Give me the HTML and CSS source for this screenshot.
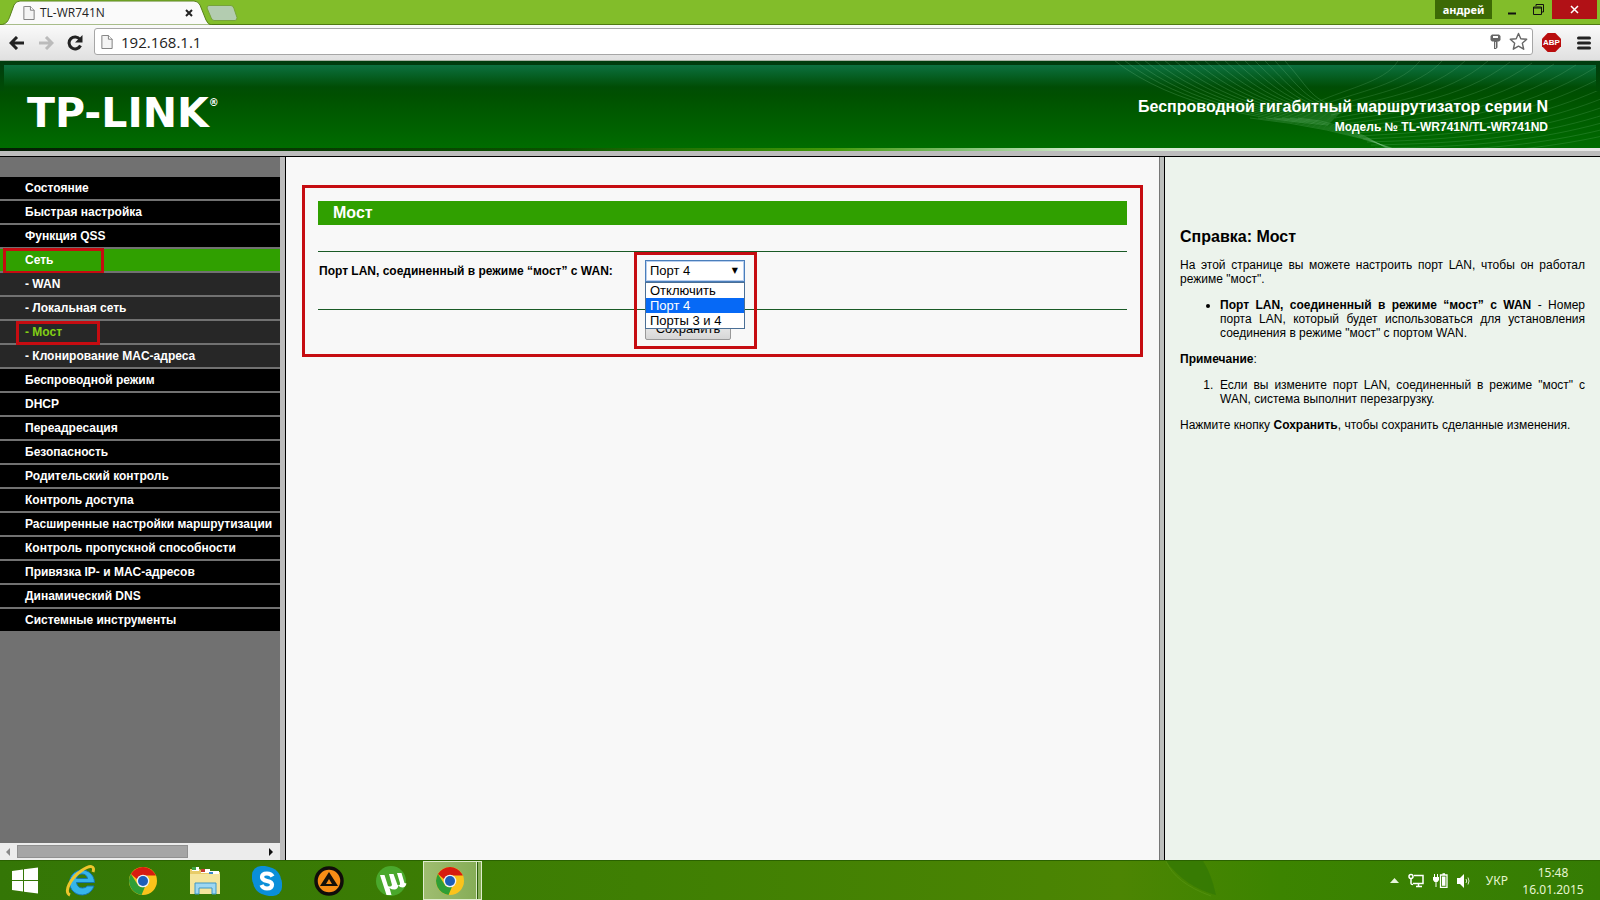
FILE: index.html
```html
<!DOCTYPE html>
<html lang="ru">
<head>
<meta charset="utf-8">
<title>TL-WR741N</title>
<link rel="stylesheet" href="styles.css">
</head>
<body>
<svg class="defs" width="0" height="0" aria-hidden="true">
  <defs>
    <symbol id="page" viewBox="0 0 12 15"><path d="M1 .5h6.5l4 4v10H.5V.5z" fill="#f4f4f4" stroke="#777"/><path d="M7.500.5v4h4" fill="#fff" stroke="#777"/></symbol>
    <symbol id="chrome" viewBox="0 0 30 30">
      <circle cx="15" cy="15" r="14" fill="#fbc31b"/>
      <path d="M2.900 8A14 14 0 0 1 27.100 8L27.800 9.500H15a6 6 0 0 0-5.500 4z" fill="#d71c10"/>
      <path d="M2.900 8 9.300 18A6.500 6.500 0 0 0 17 20.800L13.500 28.900A14 14 0 0 1 2.900 8z" fill="#2f9e35"/>
      <circle cx="15" cy="15" r="6.300" fill="#eef3f8"/><circle cx="15" cy="15" r="5" fill="#1d5fb8"/>
    </symbol>
  </defs>
</svg>
<div class="screen">
  <header class="tabs">
    <div class="tab">
      <svg class="tab-shape" viewBox="0 0 212 25" preserveAspectRatio="none" aria-hidden="true"><path d="M0 25C7 24 8 21 10 16L14 5Q16 1 20 1H194Q198 1 200 5L206 20Q208 25 212 25z" fill="#fafafa" stroke="#56801a"/></svg>
      <svg class="i-page" aria-hidden="true"><use href="#page"/></svg>
      <span class="tab-title">TL-WR741N</span>
      <button class="tab-close" aria-label="Закрыть вкладку"><svg width="8" height="8" viewBox="0 0 8 8"><path d="M1 1l6 6M7 1L1 7" stroke="#222" stroke-width="2"/></svg></button>
    </div>
    <button class="new-tab" aria-label="Новая вкладка"><svg width="32" height="16" viewBox="0 0 32 16"><path d="M3 .5h22q2 0 3 3l3 9q0 3-2 3H8q-2 0-3-3L1 3Q1 .5 3 .5z" fill="#b3ccb0" stroke="#76a33a"/></svg></button>
    <span class="grow"></span>
    <button class="user">андрей</button>
    <button class="win" aria-label="Свернуть"><svg width="8" height="12" viewBox="0 0 8 12"><path d="M0 9.500h8" stroke="#111" stroke-width="2"/></svg></button>
    <button class="win" aria-label="Восстановить"><svg width="11" height="11" viewBox="0 0 11 11"><path d="M3 2V.5h7.500V8H9M.5 3h8v7.500h-8zM.5 4h8" fill="none" stroke="#111"/></svg></button>
    <button class="win win-close" aria-label="Закрыть"><svg width="9" height="9" viewBox="0 0 9 9"><path d="M1 1l7 7M8 1L1 8" stroke="#fff" stroke-width="1.500"/></svg></button>
  </header>
  <div class="toolbar">
    <button class="nav" aria-label="Назад"><svg width="16" height="14" viewBox="0 0 16 14"><path d="M15 7H2M8 1L2 7l6 6" fill="none" stroke="#222" stroke-width="3"/></svg></button>
    <button class="nav" aria-label="Вперёд"><svg width="16" height="14" viewBox="0 0 16 14"><path d="M1 7h13M8 1l6 6-6 6" fill="none" stroke="#bbb" stroke-width="3"/></svg></button>
    <button class="nav" aria-label="Обновить"><svg width="16" height="16" viewBox="0 0 16 16"><path d="M13 4.500A6 6 0 1 0 13.500 10.500" fill="none" stroke="#222" stroke-width="3"/><path d="M15.500 0v7.500H8z" fill="#222"/></svg></button>
    <div class="omnibox">
      <svg class="i-page" aria-hidden="true"><use href="#page"/></svg>
      <input type="text" value="192.168.1.1" aria-label="Адрес">
      <svg width="11" height="16" viewBox="0 0 11 16" aria-hidden="true"><path d="M2 .5h7l1.500 1.500v4L9 7.500H7.500v6l-1.500 1.500h-2V7.500H2L.5 6V2z" fill="#666"/><path d="M3 2h5v2H3z" fill="#fff"/><path d="M5.500 8v6" stroke="#ddd"/></svg>
      <svg width="19" height="19" viewBox="0 0 19 19" aria-hidden="true"><path d="M9.500 1.500l2.300 5.200 5.900.6-4.400 3.900 1.400 6-5.200-3.100-5.200 3.100 1.400-6L1.300 7.300l5.900-.6z" fill="#fff" stroke="#666" stroke-width="1.400" stroke-linejoin="round"/></svg>
    </div>
    <button class="abp" aria-label="ABP">ABP</button>
    <button class="nav burger" aria-label="Меню"><svg width="14" height="14" viewBox="0 0 14 14"><path d="M1.500 2h11M1.500 7h11M1.500 12h11" stroke="#222" stroke-width="3" stroke-linecap="round"/></svg></button>
  </div>
  <div class="banner">
    <svg class="waves" id="waves" viewBox="0 0 500 87" preserveAspectRatio="xMaxYMin slice" aria-hidden="true"></svg>
    <div class="logo">TP-LINK<sup>®</sup></div>
    <div class="model"><h1>Беспроводной гигабитный маршрутизатор серии N</h1><p>Модель № TL-WR741N/TL-WR741ND</p></div>
  </div>
  <div class="divider"></div>
  <main class="frames">
    <nav class="side">
      <ul class="menu">
        <li><a href="#">Состояние</a></li>
        <li><a href="#">Быстрая настройка</a></li>
        <li><a href="#">Функция QSS</a></li>
        <li class="current"><a href="#">Сеть</a><span class="mark mark-net"></span></li>
        <li class="sub"><a href="#">- WAN</a></li>
        <li class="sub"><a href="#">- Локальная сеть</a></li>
        <li class="sub chosen"><a href="#">- Мост</a><span class="mark mark-bridge"></span></li>
        <li class="sub"><a href="#">- Клонирование MAC-адреса</a></li>
        <li><a href="#">Беспроводной режим</a></li>
        <li><a href="#">DHCP</a></li>
        <li><a href="#">Переадресация</a></li>
        <li><a href="#">Безопасность</a></li>
        <li><a href="#">Родительский контроль</a></li>
        <li><a href="#">Контроль доступа</a></li>
        <li><a href="#">Расширенные настройки маршрутизации</a></li>
        <li><a href="#">Контроль пропускной способности</a></li>
        <li><a href="#">Привязка IP- и MAC-адресов</a></li>
        <li><a href="#">Динамический DNS</a></li>
        <li><a href="#">Системные инструменты</a></li>
      </ul>
      <div class="scroll"><svg width="4" height="8" viewBox="0 0 4 8"><path d="M4 0v8L0 4z" fill="#888"/></svg><span class="thumb"></span><svg width="4" height="8" viewBox="0 0 4 8"><path d="M0 0v8l4-4z" fill="#111"/></svg></div>
    </nav>
    <section class="content">
      <form class="panel">
        <h2>Мост</h2>
        <div class="row">
          <label for="port">Порт LAN, соединенный в режиме “мост” с WAN:</label>
          <div class="field">
            <select id="port"><option>Порт 4</option></select>
            <ul class="options" role="listbox"><li role="option">Отключить</li><li role="option" class="on" aria-selected="true">Порт 4</li><li role="option">Порты 3 и 4</li></ul>
            <span class="mark mark-field"></span>
          </div>
        </div>
        <div class="actions"><button type="button" class="save">Сохранить</button></div>
      </form>
    </section>
    <aside class="help">
      <h2>Справка: Мост</h2>
      <p>На этой странице вы можете настроить порт LAN, чтобы он работал режиме "мост".</p>
      <ul><li><b>Порт LAN, соединенный в режиме “мост” с WAN</b> - Номер порта LAN, который будет использоваться для установления соединения в режиме "мост" с портом WAN.</li></ul>
      <p><b>Примечание</b>:</p>
      <ol><li>Если вы измените порт LAN, соединенный в режиме "мост" с WAN, система выполнит перезагрузку.</li></ol>
      <p>Нажмите кнопку <b>Сохранить</b>, чтобы сохранить сделанные изменения.</p>
    </aside>
  </main>
  <footer class="taskbar">
    <button class="task" aria-label="Пуск"><svg width="28" height="28" viewBox="0 0 28 28"><path d="M1 4l11-1.500V13H1zM13 2.300L27 .5V13H13zM1 14h11v10.500L1 23zM13 14h14v12.500l-14-1.800z" fill="#fff"/></svg></button>
    <button class="task" aria-label="Internet Explorer"><svg width="32" height="32" viewBox="0 0 32 32"><path d="M29 21A12.500 12.500 0 1 1 29.500 17.500H11.500q1 5.500 6 5.500 3 0 5-2z" fill="#36b5ea" stroke="#1576ad"/><path d="M11.500 13.500h11q-1-4.500-5.500-4.500t-5.500 4.500z" fill="#3b7d0a" stroke="#1576ad"/><path d="M5 30C-2 27 6 13 16 6S30 1 28 7" fill="none" stroke="#edc52c" stroke-width="3"/></svg></button>
    <button class="task" aria-label="Google Chrome"><svg width="30" height="30"><use href="#chrome"/></svg></button>
    <button class="task" aria-label="Проводник"><svg width="32" height="30" viewBox="0 0 32 30"><path d="M1 3h10l2 3h18v22H1z" fill="#e8cc68"/><path d="M3 1h7v4H3z" fill="#fff"/><path d="M3 1h4v3H3z" fill="#3ea344"/><path d="M12 3h9v4h-9z" fill="#fff"/><path d="M12 3h4v3h-4z" fill="#c43b2d"/><path d="M20 5h10v5H20z" fill="#fff"/><path d="M20 6h4v2h-4z" fill="#3787cc"/><path d="M1 8h30v20H1z" fill="#f5e59c"/><path d="M6 28V17h21v11h-4v-6H10v6z" fill="#9dd7f2" stroke="#3f97c5"/></svg></button>
    <button class="task" aria-label="Skype"><svg width="32" height="32" viewBox="0 0 32 32"><rect x="1" y="1" width="22" height="22" rx="9" fill="#0a8fd9"/><rect x="9" y="9" width="22" height="22" rx="9" fill="#0a8fd9"/><circle cx="16" cy="16" r="14" fill="#0a8fd9"/><path d="M21.500 11.500Q20 8.500 16 8.500q-5 0-5 3.500 0 3 5 4t5 3.500q0 4-5 4-4 0-5.500-3.500" fill="none" stroke="#fff" stroke-width="4.200"/></svg></button>
    <button class="task" aria-label="AIMP"><svg width="30" height="30" viewBox="0 0 30 30"><circle cx="15" cy="15" r="13" fill="#f78d16" stroke="#100d0a" stroke-width="3.500"/><path d="M15 6l9 14H6zM15 13l-3 5h6z" fill="#15100a" fill-rule="evenodd"/></svg></button>
    <button class="task" aria-label="uTorrent"><svg width="32" height="32" viewBox="0 0 32 32"><circle cx="16" cy="16" r="15" fill="#4aa82c"/><path d="M5 10h4.500l3.500 11q3 1.500 4-1L14 9h4.500l4 11q3 1 2.500-2L22 8h4.500l3 10 2 .5q-1 4-4 4-3 0-4-2-1 4-4 4-3 0-5-1.500l2 7h-5z" fill="#fff"/></svg></button>
    <button class="task active" aria-label="Google Chrome, открыто"><svg width="30" height="30"><use href="#chrome"/></svg></button>
    <span class="grow"></span>
    <svg class="leaf" width="60" height="36" viewBox="0 0 60 36" aria-hidden="true"><path d="M3 0h37q8 12 13 34Q22 26 3 0z" fill="#2e7505" opacity=".6"/><path d="M3 0Q12 22 48 35" fill="none" stroke="#5d9a18" opacity=".5"/></svg>
    <div class="tray">
      <svg width="9" height="5" viewBox="0 0 9 5"><path d="M0 5l4.500-5L9 5z" fill="#e8f5dc"/></svg>
      <svg width="16" height="15" viewBox="0 0 16 15"><path d="M6 2.500h9v8H5M8 13.500h6M10.500 11v2M3 6v4.500q0 1 2 1" fill="none" stroke="#fff" stroke-width="1.500"/><circle cx="3" cy="3.500" r="2" fill="none" stroke="#fff" stroke-width="1.500"/></svg>
      <svg width="15" height="15" viewBox="0 0 15 15"><path d="M7.500 2h6.500v12.300H7.500zM9.500 1h2.500" fill="none" stroke="#fff" stroke-width="1.300"/><path d="M9 3.500h3.500v9.300H9z" fill="#fff"/><path d="M1.500 1v3M4.500 1v3M3 8v6" stroke="#fff"/><path d="M0 4h6v3L4.500 9h-3L0 7z" fill="#fff"/></svg>
      <svg width="13" height="14" viewBox="0 0 13 14"><path d="M0 4h3l4-4v14l-4-4H0z" fill="#fff"/><path d="M9 5q1.500 2 0 4M11 3.500q2 3.500 0 7" fill="none" stroke="#dcebd0"/></svg>
      <span class="lang">УКР</span>
      <div class="clock"><span>15:48</span><span>16.01.2015</span></div>
    </div>
  </footer>
</div>
<script src="waves.js"></script>
</body>
</html>
```
FILE: styles.css
```css
* { box-sizing: border-box; }
body { margin: 0; font: 12px/14px "Liberation Sans", Arial, sans-serif; color: #000; }
button { border: 0; padding: 0; background: none; font: inherit; color: inherit; }
h1, h2, p, ul { margin: 0; }
.defs { position: absolute; }
.grow { flex: 1; }
.screen { display: flex; flex-direction: column; height: 100vh; overflow: hidden; }

.tabs { display: flex; align-items: flex-start; height: 25px; background: #82bd2a; border-bottom: 1px solid #4f7a12; flex: none; }
.tab { position: relative; display: flex; align-items: center; width: 212px; height: 25px; padding: 0 19px 0 23px; }
.tab-shape { position: absolute; inset: 0; width: 100%; height: 100%; }
.i-page { position: relative; width: 12px; height: 14px; flex: none; }
.tab-title { position: relative; flex: 1; margin-left: 5px; font: 12px/16px "Open Sans", sans-serif; color: #222; }
.tab-close { position: relative; display: flex; }
.new-tab { margin: 5px 0 0 -6px; height: 16px; }
.user { width: 57px; height: 19px; background: #3d6a05; color: #fff; font: bold 11px/18px "Noto Sans", sans-serif; }
.win { display: flex; align-items: center; justify-content: center; width: 26px; height: 19px; margin-left: 7px; }
.win + .win { margin-left: 0; }
.win-close { width: 45px; margin: 0 3px 0 0; background: #b11116; }
.win + .win-close { margin-left: 1px; }

.toolbar { display: flex; align-items: center; height: 36px; flex: none; background: linear-gradient(#fafafa, #e0e0e0); border-bottom: 1px solid #a9b3a5; }
.nav { display: flex; justify-content: center; width: 29px; }
.nav:first-child { margin-left: 2px; }
.omnibox { display: flex; align-items: center; gap: 8px; flex: 1; height: 27px; margin: 0 0 2px 5px; padding: 0 4px 0 6px; background: #fff; border: 1px solid #a6a6a6; border-radius: 3px; }
.omnibox input { flex: 1; min-width: 0; border: 0; padding: 0; outline: 0; background: none; font: 15px/20px "Open Sans", sans-serif; color: #222; }
.abp { width: 19px; height: 19px; margin-left: 9px; background: #b90d0d; color: #fff; font: bold 8px/19px "Liberation Sans", sans-serif; clip-path: polygon(30% 0, 70% 0, 100% 30%, 100% 70%, 70% 100%, 30% 100%, 0 70%, 0 30%); }
.burger { width: 39px; padding-left: 6px; }

.banner { position: relative; display: flex; justify-content: space-between; height: 87px; flex: none; padding: 0 52px 0 27px; color: #fff; background: linear-gradient(#003c0e 0 4px, #0c7140 4px, #004d05 26px, #005000 34px, #006c00 87px); }
.banner::before, .banner::after { content: ""; position: absolute; left: 0; top: 0; width: 4px; height: 30px; background: linear-gradient(#003c0e, #004d05); }
.banner::after { left: auto; right: 0; }
.waves { position: absolute; right: 0; top: 0; width: 500px; height: 87px; }
.logo { position: relative; display: flex; margin-top: 30px; font: bold 41px/44px "DejaVu Sans", sans-serif; }
.logo sup { font-size: 10px; line-height: 24px; vertical-align: top; }
.model { position: relative; text-align: right; padding-top: 36px; }
.model h1 { font-size: 16px; line-height: 20px; }
.model p { font-weight: bold; line-height: 20px; }
.divider { height: 9px; flex: none; background: linear-gradient(90deg, #041c04, #0a5200 35%, #429a08 52%, #7fc070 60%, #d8ecd4 68%, #e6e6e6) no-repeat 0 0 / 100% 3px #bdbdbd; border-bottom: 1px solid #000; }

.frames { display: flex; flex: 1; min-height: 0; }
.side { display: flex; flex-direction: column; flex: none; width: 286px; background: #717171; border-right: 1px solid #000; box-shadow: inset -5px 0 #bcbcbc; padding: 20px 5px 0 0; }
.menu { flex: 1; list-style: none; padding: 0; font-weight: bold; color: #fff; }
.menu li { position: relative; height: 22px; margin-bottom: 2px; padding-left: 25px; background: #000; line-height: 22px; white-space: nowrap; }
.menu a { color: inherit; text-decoration: none; }
.menu .sub { background: #272727; }
.menu .current { background: #30a000; }
.menu .chosen { color: #83cf15; }
.mark { position: absolute; border: 3px solid #c60c11; pointer-events: none; }
.mark-net { left: 3px; top: -1px; width: 101px; height: 26px; }
.mark-bridge { left: 16px; top: 0; width: 84px; height: 24px; }
.scroll { display: flex; align-items: center; justify-content: space-between; height: 17px; padding: 0 7px 0 6px; background: #ececec; }
.thumb { width: 171px; height: 13px; margin: 0 auto 0 7px; background: #a5a5a5; border: 1px solid #909090; }

.content { flex: 1; min-width: 0; padding: 28px 16px 0 16px; background: #f8f8f8; }
.panel { border: 3px solid #c60c11; height: 172px; padding: 13px; }
.panel h2 { height: 24px; padding-left: 15px; background: #30a000; color: #fff; font-size: 16px; line-height: 24px; }
.row { display: flex; height: 59px; margin-top: 26px; padding: 8px 1px 0; border: 1px solid #1a5a26; border-width: 1px 0; }
.row label { width: 326px; line-height: 22px; font-weight: bold; }
.field { position: relative; }
.field select { display: block; appearance: none; width: 100px; height: 22px; padding: 0 4px; border: 1px solid #4a7ebb; outline: 1px solid #b9cfee; outline-offset: -2px; background: #fff; font: 13px/18px "Liberation Sans", sans-serif; color: #000; }
.field::after { content: "▼"; position: absolute; right: 7px; top: 4px; font: 8px/14px "DejaVu Sans", sans-serif; }
.options { position: absolute; z-index: 2; left: 0; top: 22px; width: 100px; list-style: none; padding: 0; background: #fff; border: 1px solid #4a6f96; font-size: 13px; line-height: 15px; }
.options li { padding-left: 4px; }
.options .on { background: #0669f6; color: #fff; }
.mark-field { z-index: 3; left: -11px; top: -8px; width: 123px; height: 97px; }
.actions { padding: 8px 0 0 327px; }
.save { width: 86px; height: 22px; border: 1px solid #999; border-radius: 2px; background: linear-gradient(#f2f2f2, #d6d6d6); font-size: 13px; }

.help { flex: none; width: 441px; padding: 70px 15px 0 20px; background: #ecf3ec; border-left: 1px solid #777; box-shadow: inset 4px 0 #bcbfbc, inset 5px 0 #000; text-align: justify; }
.help h2 { margin-bottom: 11px; font-size: 16px; line-height: 20px; }
.help ul, .help ol { margin: 12px 0; padding-left: 40px; }
.help ol li::marker { content: counter(list-item) ". \00a0"; }

.taskbar { display: flex; align-items: center; height: 40px; flex: none; color: #e6f5d0; background: linear-gradient(90deg, #347606, #3f7f03 40%, #4c8503 70%, #3c8400 80%, #357c04); border-top: 1px solid #2a6200; }
.task { display: flex; align-items: center; justify-content: center; width: 62px; height: 39px; }
.task:first-child { width: 50px; }
.task.active { width: 59px; height: 39px; padding-right: 6px; margin-left: 1px; border: 1px solid #dfeccd; background: linear-gradient(90deg, #9fbd70, #86ad57 52px, #dfeccd 52px 53px, #2b5d0a 53px 54px, #86ad57 54px); }
.leaf { align-self: flex-start; margin-right: 167px; }
.tray { display: flex; align-items: center; gap: 9px; padding-right: 18px; font: 12px/17px "Noto Sans", sans-serif; }
.lang { margin-left: 7px; }
.clock { display: flex; flex-direction: column; align-items: center; width: 58px; margin-left: 7px; }
```
FILE: waves.js
```js
const waves = document.getElementById("waves");
function addCurve(d, opacity) {
  const p = document.createElementNS("http://www.w3.org/2000/svg", "path");
  p.setAttribute("d", d);
  p.setAttribute("fill", "none");
  p.setAttribute("stroke", "#8fd09a");
  p.setAttribute("stroke-opacity", opacity);
  waves.appendChild(p);
}
for (let i = 0; i < 18; i++) {
  addCurve(`M${15 + i * 10} 0C${75 + i * 8} ${46 - i} ${160 + i * 3} ${58 - i} ${228 + i} ${64 - i}`, 0.22);
  addCurve(`M${215 + i * 4} ${42 + i * 3}C${250 + i * 9} ${26 + i * 4} ${290 + i * 14} ${20 + i * 4} ${300 + i * 22} ${-4 + i}`, 0.18);
}
for (let i = 0; i < 7; i++) {
  addCurve(`M${150 + i * 8} ${57}Q${232 + i * 2} ${66 - i} ${292 - i} 87`, 0.2);
}
```
